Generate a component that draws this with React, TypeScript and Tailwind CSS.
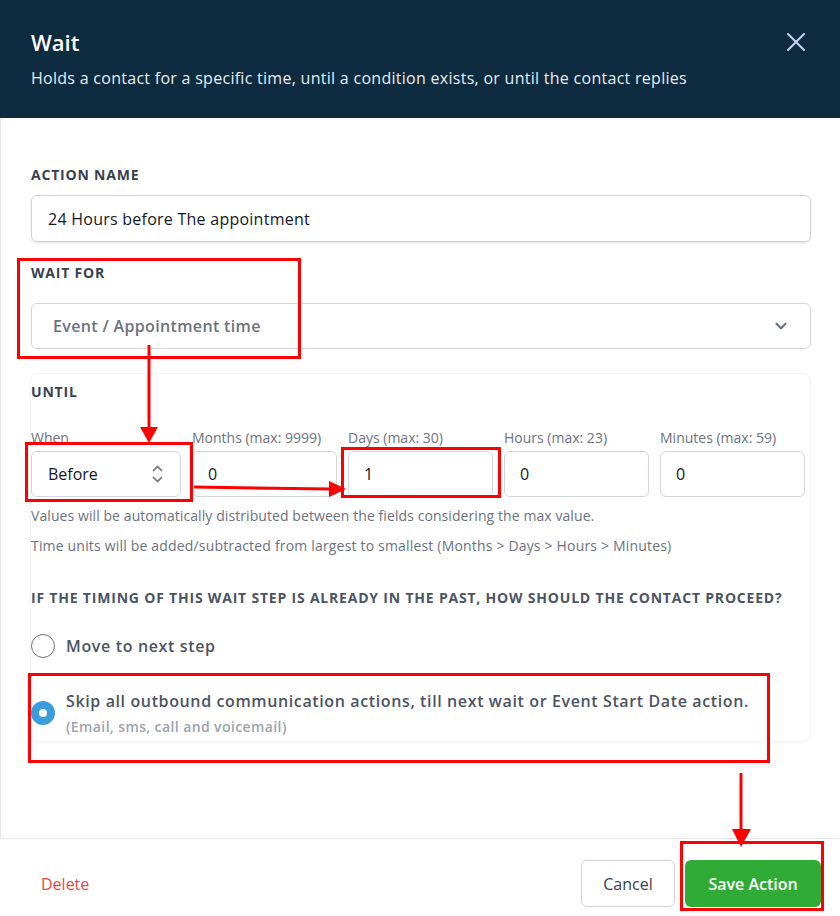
import { ChevronDown } from "lucide-react";

const fields = [
  { label: "Months (max: 9999)", value: "0" },
  { label: "Days (max: 30)", value: "1" },
  { label: "Hours (max: 23)", value: "0" },
  { label: "Minutes (max: 59)", value: "0" },
];

export default function App() {
  return (
    <div className="relative w-[840px] h-[916px] bg-white flex flex-col overflow-hidden font-['Open_Sans',sans-serif]">
      {/* Header */}
      <div className="h-[118px] shrink-0 bg-[#0e2b40] pl-[31px] pr-[35px] pt-[27px]">
        <div className="flex items-center justify-between h-[30px]">
          <h1 className="text-[22px] leading-[30px] font-semibold text-white">Wait</h1>
          <svg width="18" height="18" viewBox="0 0 18 18" className="text-[#c9d2f5]">
            <path d="M1 1L17 17M17 1L1 17" stroke="currentColor" strokeWidth="2" strokeLinecap="round" />
          </svg>
        </div>
        <p className="mt-[9px] text-[16px] leading-[24px] tracking-[0.28px] text-[#e8edf2]">
          Holds a contact for a specific time, until a condition exists, or until the contact replies
        </p>
      </div>

      {/* Body */}
      <div className="flex-1 border-l border-[#e5e7eb] pl-[30px] pr-[29px] pt-[47px]">
        <label className="block text-[14px] leading-5 font-bold uppercase tracking-[0.8px] text-[#374151]">Action Name</label>
        <div className="mt-[10px] h-[47px] rounded-md border border-[#d1d5db] shadow-sm flex items-center pl-[16px] text-[16px] tracking-[0.25px] text-[#111827]">
          24 Hours before The appointment
        </div>

        <label className="mt-[21px] block text-[14px] leading-5 font-bold uppercase tracking-[0.8px] text-[#374151]">Wait For</label>
        <div className="mt-[20px] h-[46px] rounded-md border border-[#d1d5db] flex items-center justify-between pl-[21px] pr-[20px]">
          <span className="text-[16px] font-semibold tracking-[0.35px] text-[#6b7280]">Event / Appointment time</span>
          <ChevronDown className="w-[18px] h-[18px] text-[#6b7280]" strokeWidth={3} />
        </div>

        {/* Until card */}
        <div className="mt-[24px] -ml-px rounded-lg border border-[#f3f4f6] shadow-[0_1px_3px_rgba(0,0,0,0.04)] pt-[8px] pb-[4px] pr-[6px]">
          <label className="block text-[14px] leading-5 font-bold uppercase tracking-[0.8px] text-[#374151]">Until</label>
          <div className="mt-[26px] grid grid-cols-[150px_145px_145px_145px_145px] gap-x-[11px]">
            <div>
              <div className="text-[14px] leading-5 text-[#6b7280]">When</div>
              <div className="mt-[3px] h-[46px] rounded-md border border-[#d1d5db] flex items-center justify-between pl-[16px] pr-[17px]">
                <span className="text-[16px] text-[#111827]">Before</span>
                <svg width="11" height="20" viewBox="0 0 11 20" fill="none" stroke="#6b7280" strokeWidth="1.7" strokeLinecap="round" strokeLinejoin="round">
                  <path d="M1.5 6.5L5.5 2.5L9.5 6.5" />
                  <path d="M1.5 13.5L5.5 17.5L9.5 13.5" />
                </svg>
              </div>
            </div>
            {fields.map((f) => (
              <div key={f.label}>
                <div className="text-[14px] leading-5 text-[#6b7280] whitespace-nowrap">{f.label}</div>
                <div className="mt-[3px] h-[46px] rounded-md border border-[#d1d5db] flex items-center pl-[15px] text-[16px] text-[#111827]">
                  {f.value}
                </div>
              </div>
            ))}
          </div>

          <p className="mt-[9px] text-[14px] leading-5 tracking-[0.08px] text-[#6b7280]">
            Values will be automatically distributed between the fields considering the max value.
          </p>
          <p className="mt-[10px] text-[14px] leading-5 tracking-[0.18px] text-[#6b7280]">
            Time units will be added/subtracted from largest to smallest (Months &gt; Days &gt; Hours &gt; Minutes)
          </p>

          <p className="mt-[32px] text-[14px] leading-5 font-bold uppercase tracking-[0.8px] text-[#4b5563] whitespace-nowrap">
            If the timing of this wait step is already in the past, how should the contact proceed?
          </p>

          <div className="mt-[26px] flex items-center gap-[11px]">
            <span className="w-[24px] h-[24px] rounded-full border border-[#6b7280] bg-white shrink-0" />
            <span className="text-[16px] leading-6 font-semibold tracking-[0.65px] text-[#4b5563]">Move to next step</span>
          </div>

          <div className="mt-[31px] flex items-center gap-[11px]">
            <span className="w-[24px] h-[24px] rounded-full border-[8px] border-[#3c9ddd] bg-white shrink-0" />
            <div>
              <div className="text-[16px] leading-6 font-semibold tracking-[0.62px] text-[#4b5563] whitespace-nowrap">
                Skip all outbound communication actions, till next wait or Event Start Date action.
              </div>
              <div className="mt-[4px] text-[14px] leading-5 font-semibold tracking-[0.4px] text-[#9ca3af]">
                (Email, sms, call and voicemail)
              </div>
            </div>
          </div>
        </div>
      </div>

      {/* Footer */}
      <div className="h-[78px] shrink-0 border-t border-[#e5e7eb] flex items-start justify-between pl-[41px] pr-[19px] pt-[21px]">
        <button className="h-[47px] flex items-center text-[16px] text-[#ef4444]">Delete</button>
        <div className="flex items-center gap-[10px]">
          <button className="h-[47px] w-[94px] rounded-md border border-[#d1d5db] bg-white text-[16px] font-medium text-[#374151]">
            Cancel
          </button>
          <button className="h-[47px] w-[136px] rounded-md bg-[#30ab36] text-[16px] font-semibold text-white">
            Save Action
          </button>
        </div>
      </div>

      {/* Annotations */}
      <div className="absolute left-[17px] top-[258px] w-[284px] h-[101px] border-[3px] border-[#ff0000]" />
      <div className="absolute left-[25px] top-[442px] w-[168px] h-[60px] border-[3px] border-[#ff0000]" />
      <div className="absolute left-[341px] top-[447px] w-[160px] h-[51px] border-[3px] border-[#ff0000]" />
      <div className="absolute left-[28px] top-[673px] w-[742px] h-[90px] border-[3px] border-[#ff0000]" />
      <div className="absolute left-[680px] top-[841px] w-[144px] h-[70px] border-[3px] border-[#ff0000]" />
      <svg className="absolute inset-0 pointer-events-none" width="840" height="916" viewBox="0 0 840 916">
        <g fill="#ff0000" stroke="#ff0000">
          <line x1="149" y1="345" x2="149" y2="428" strokeWidth="3" />
          <polygon points="140,427 158,427 149,443" strokeWidth="0" />
          <line x1="194" y1="487" x2="331" y2="489" strokeWidth="3" />
          <polygon points="329,481 329,497 346,489" strokeWidth="0" />
          <line x1="741" y1="773" x2="741" y2="830" strokeWidth="3" />
          <polygon points="732,829 751,829 741,847" strokeWidth="0" />
        </g>
      </svg>
    </div>
  );
}
